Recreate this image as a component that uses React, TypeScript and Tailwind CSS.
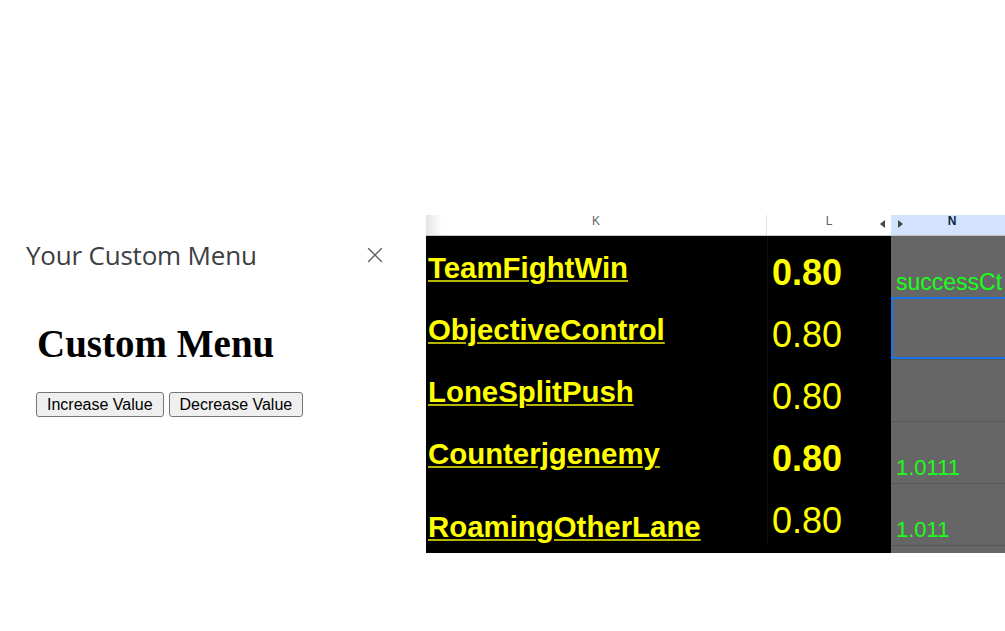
import { X } from 'lucide-react';

type Row = {
  label: string;
  labelPad: string;
  value: string;
  bold: boolean;
  note?: string;
  selected?: boolean;
};

const rows: Row[] = [
  { label: 'TeamFightWin', labelPad: 'pt-[15px]', value: '0.80', bold: true, note: 'successCt' },
  { label: 'ObjectiveControl', labelPad: 'pt-[15px]', value: '0.80', bold: false, selected: true },
  { label: 'LoneSplitPush', labelPad: 'pt-[15px]', value: '0.80', bold: false },
  { label: 'Counterjgenemy', labelPad: 'pt-[15px]', value: '0.80', bold: true, note: '1.0111' },
  { label: 'RoamingOtherLane', labelPad: 'pt-[26px]', value: '0.80', bold: false, note: '1.011' },
];

function CustomMenu() {
  return (
    <div className="w-[426px] shrink-0 pt-[240px]">
      <div className="flex items-center justify-between h-[30px] pl-[26px] pr-[38px]">
        <span className="font-['Open_Sans',sans-serif] text-[26px] leading-[30px] text-[#3c4043] tracking-[-0.2px]">
          Your Custom Menu
        </span>
        <X className="w-[26px] h-[26px] text-[#5f6368]" strokeWidth={1.3} />
      </div>
      <div className="pl-[37px] mt-[51px]">
        <h1 className="font-['Liberation_Serif',serif] font-bold text-[39px] leading-[45px] text-black">
          Custom Menu
        </h1>
        <div className="flex gap-[5px] mt-[26px] -ml-[1px]">
          <button className="h-[25px] px-[10px] bg-[#efefef] border border-[#767676] rounded-[3px] font-['Liberation_Sans',Arial,sans-serif] text-[16px] leading-none text-black">
            Increase Value
          </button>
          <button className="h-[25px] px-[10px] bg-[#efefef] border border-[#767676] rounded-[3px] font-['Liberation_Sans',Arial,sans-serif] text-[16px] leading-none text-black">
            Decrease Value
          </button>
        </div>
      </div>
    </div>
  );
}

function Triangle({ dir }: { dir: 'left' | 'right' }) {
  return (
    <svg width="5" height="8" viewBox="0 0 5 8" className="fill-[#444746]">
      {dir === 'left' ? <path d="M5 0 L0 4 L5 8 Z" /> : <path d="M0 0 L5 4 L0 8 Z" />}
    </svg>
  );
}

function Sheet() {
  return (
    <div className="flex-1 min-w-0 overflow-hidden pt-[215px] font-['Liberation_Sans',Arial,sans-serif]">
      <div className="flex h-[21px] border-b border-[#c4c7c5] text-[12px] leading-[12px]">
        <div className="w-[341px] shrink-0 flex justify-center border-r border-[#e1e1e1] bg-[linear-gradient(to_right,#e4e4e4,#ffffff_16px)] text-[#5f6368]">
          K
        </div>
        <div className="w-[124px] shrink-0 flex justify-center relative text-[#5f6368]">
          L
          <span className="absolute right-[6px] top-[5px]">
            <Triangle dir="left" />
          </span>
        </div>
        <div className="w-[122px] shrink-0 flex justify-center relative bg-[#d3e3fd] font-bold text-[#0b1f44]">
          N
          <span className="absolute left-[7px] top-[5px]">
            <Triangle dir="right" />
          </span>
        </div>
      </div>

      {rows.map((row) => (
        <div key={row.label} className="flex h-[62px]">
          <div className={`w-[341px] shrink-0 bg-black pl-[2px] ${row.labelPad}`}>
            <span className="text-[29.4px] leading-[33px] font-bold text-[#ffff00] underline decoration-[#b5b500] decoration-2 underline-offset-[2px]">
              {row.label}
            </span>
          </div>
          <div className="w-[124px] shrink-0 bg-black border-l border-[#0c0c0c] pt-[19px] pl-[4px]">
            <span className={`text-[36px] leading-[36px] text-[#ffff00] ${row.bold ? 'font-bold' : 'font-normal'}`}>
              {row.value}
            </span>
          </div>
          <div className="w-[122px] shrink-0 bg-[#666666] border-b border-[#585858] relative pt-[35px] pl-[5px]">
            {row.note && (
              <span
                className={`${row.note === 'successCt' ? 'text-[23px]' : 'text-[22px]'} leading-[22px] text-[#1aff1a] whitespace-nowrap`}
              >
                {row.note}
              </span>
            )}
            {row.selected && (
              <div className="absolute -top-[1px] left-0 -right-[2px] bottom-0 border-2 border-[#1a73e8]" />
            )}
          </div>
        </div>
      ))}

      <div className="flex h-[7px]">
        <div className="w-[341px] shrink-0 bg-black" />
        <div className="w-[124px] shrink-0 bg-black" />
        <div className="w-[122px] shrink-0 bg-[#666666]" />
      </div>
    </div>
  );
}

export default function App() {
  return (
    <div className="w-[1005px] h-[631px] bg-white flex overflow-hidden">
      <CustomMenu />
      <Sheet />
    </div>
  );
}
